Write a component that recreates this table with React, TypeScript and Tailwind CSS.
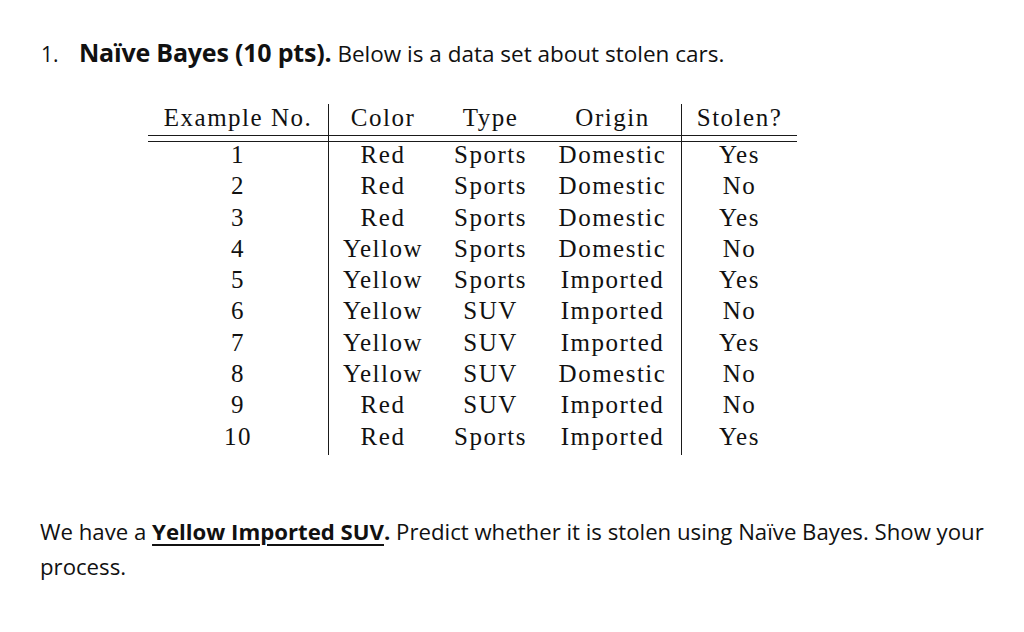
import React from "react";

const rows: [string, string, string, string, string][] = [
  ["1", "Red", "Sports", "Domestic", "Yes"],
  ["2", "Red", "Sports", "Domestic", "No"],
  ["3", "Red", "Sports", "Domestic", "Yes"],
  ["4", "Yellow", "Sports", "Domestic", "No"],
  ["5", "Yellow", "Sports", "Imported", "Yes"],
  ["6", "Yellow", "SUV", "Imported", "No"],
  ["7", "Yellow", "SUV", "Imported", "Yes"],
  ["8", "Yellow", "SUV", "Domestic", "No"],
  ["9", "Red", "SUV", "Imported", "No"],
  ["10", "Red", "Sports", "Imported", "Yes"],
];

const gridCols = "grid grid-cols-[181px_108px_107px_138px_115px]";

function Row({ cells, header }: { cells: string[]; header?: boolean }) {
  return (
    <div className={`${gridCols} ${header ? "h-[31px] leading-[27px]" : "h-[31.3px] leading-[25px]"}`}>
      {cells.map((c, i) => (
        <div
          key={i}
          className={`text-center whitespace-nowrap ${i === 0 || i === 3 ? "border-r border-[#1a1a1a]" : ""}`}
        >
          {c}
        </div>
      ))}
    </div>
  );
}

export default function App() {
  return (
    <div className="w-[1024px] h-[632px] bg-white text-[#111] overflow-hidden">
      <div className="h-[108px] pt-[37px] pl-[41px] leading-[30px] whitespace-nowrap font-['Open_Sans',sans-serif]">
        <span className="inline-block w-[38px] text-[21px]">1.</span>
        <span className="text-[25px] font-bold tracking-[-0.2px]">Naïve Bayes (10 pts).</span>
        <span className="text-[22.5px] ml-[6px]">Below is a data set about stolen cars.</span>
      </div>

      <div className="-mt-[4px] ml-[148px] w-[649px] text-[25px] tracking-[1.5px] font-['Liberation_Serif',serif] text-[#111]">
        <Row header cells={["Example No.", "Color", "Type", "Origin", "Stolen?"]} />
        <div className={`${gridCols} h-[7px] border-y border-[#1a1a1a]`}>
          <div className="border-r border-[#1a1a1a]" />
          <div />
          <div />
          <div className="border-r border-[#1a1a1a]" />
          <div />
        </div>
        {rows.map((r) => (
          <Row key={r[0]} cells={r} />
        ))}
      </div>

      <div className="mt-[59px] pl-[40px] pr-[20px] text-[22.2px] leading-[35px] whitespace-nowrap font-['Open_Sans',sans-serif]">
        We have a{" "}
        <span className="font-bold">
          <span className="underline decoration-[2px] underline-offset-[4px]">Yellow Imported SUV</span>.
        </span>{" "}
        Predict whether it is stolen using Naïve Bayes. Show your
        <br />
        process.
      </div>
    </div>
  );
}
